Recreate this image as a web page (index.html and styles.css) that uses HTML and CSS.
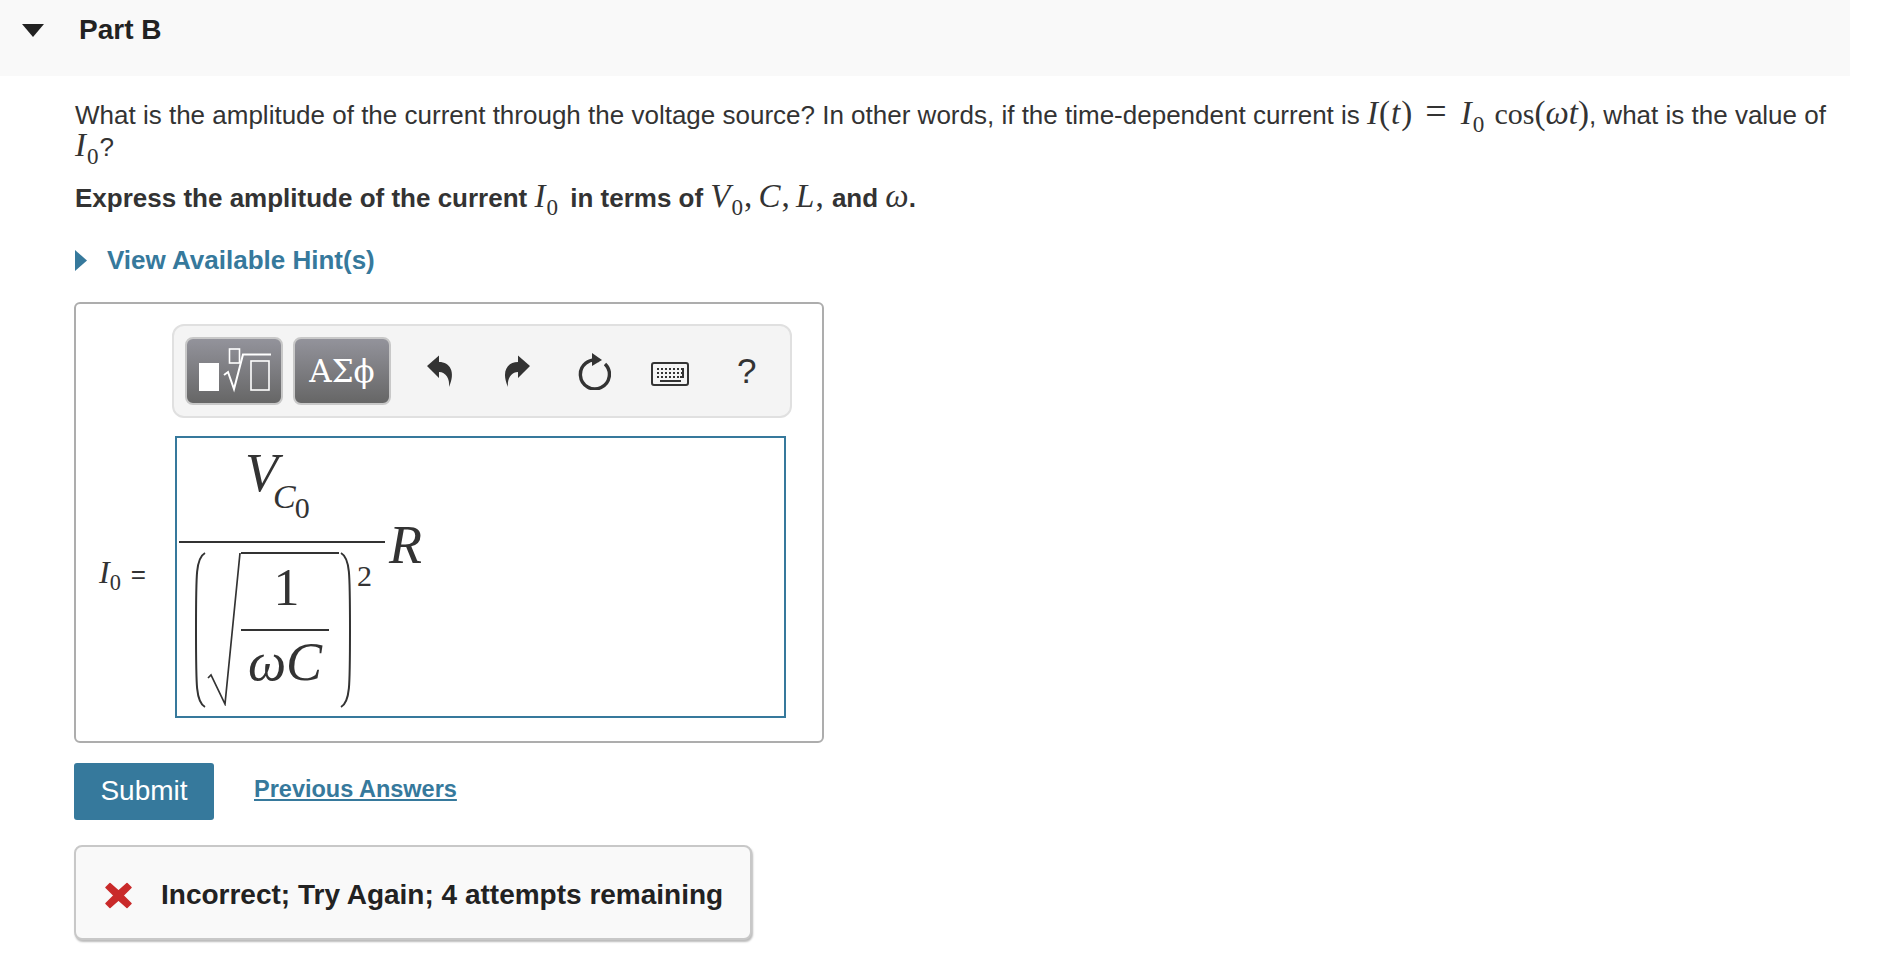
FILE: index.html
```html
<!DOCTYPE html>
<html lang="en">
<head>
<meta charset="utf-8">
<title>Part B</title>
<link rel="stylesheet" href="styles.css">
</head>
<body>
<header class="part-head">
  <svg class="caret" width="22" height="13" viewBox="0 0 22 13"><path d="M0 0H22L11 13Z" fill="#222"/></svg>
  <h2 class="part-title">Part B</h2>
</header>
<main class="content">
  <p class="question">What is the amplitude of the current through the voltage source? In other words, if the time-dependent current is <span class="tex"><i>I</i>(<i>t</i>)<span class="rel">=</span><i>I</i><sub>0</sub> <span class="fn">cos</span><span class="tight">(<i>ωt</i>)</span></span>, what is the value of <span class="tex"><i>I</i><sub>0</sub></span>?</p>
  <p class="prompt">Express the amplitude of the current <span class="tex tex-gap"><i>I</i><sub>0</sub></span> in terms of <span class="tex tex-list"><i>V</i><sub>0</sub>, <i>C</i>, <i>L</i>,</span> and <span class="tex tight"><i>ω</i></span>.</p>
  <div class="hint">
    <svg width="12" height="21" viewBox="0 0 12 21"><path d="M0 0L12 10.5L0 21Z" fill="#36799c"/></svg>
    <a class="hint-link">View Available Hint(s)</a>
  </div>
  <section class="answer-box">
    <div class="toolbar">
      <div class="tool-btn tool-btn-a">
        <svg width="76" height="46" viewBox="0 0 76 46" fill="none" stroke="#fff" stroke-width="1.6">
          <rect x="3" y="15" width="20" height="28" fill="#fff" stroke="none"/>
          <rect x="33.500" y="1" width="10" height="14"/>
          <rect x="55" y="13" width="18" height="29"/>
          <path d="M28 27L32 24L38 41L47 6.500H75" stroke-width="2"/>
        </svg>
      </div>
      <div class="tool-btn tool-btn-b">ΑΣϕ</div>
      <svg class="ic ic-undo" width="30" height="33" viewBox="0 0 30 33"><path d="M1 11L13 0.500V7C24 7 30 17 23 32C24 24 20 17 13 17V23Z" fill="#333"/></svg>
      <svg class="ic ic-redo" width="30" height="33" viewBox="0 0 30 33"><path d="M29 11L17 0.500V7C6 7 0 17 7 32C6 24 10 17 17 17V23Z" fill="#333"/></svg>
      <svg class="ic ic-reset" width="36" height="38" viewBox="0 0 36 38"><path d="M24 8.500A14.500 14.500 0 1 0 30 12" fill="none" stroke="#333" stroke-width="3.400"/><path d="M17 1L27 8L17 14Z" fill="#333"/></svg>
      <svg class="ic ic-keys" width="38" height="24" viewBox="0 0 38 24">
        <rect x="1" y="1" width="36" height="22" rx="2" fill="none" stroke="#333" stroke-width="2"/>
        <path d="M6 7H31M6 11H32M6 15H28" stroke="#333" stroke-width="2" stroke-dasharray="2 2" fill="none"/>
        <path d="M32 6V15H29M9 19H30" stroke="#333" stroke-width="2" fill="none"/>
      </svg>
      <span class="ic-help">?</span>
    </div>
    <div class="entry">
      <div class="entry-label"><i>I</i><sub>0</sub> <span class="eq">=</span></div>
      <div class="input">
        <div class="frac">
          <div class="num"><i>V</i><span class="sub1"><i>C</i><span class="sub2">0</span></span></div>
          <div class="denom">
            <svg class="paren" width="14" height="156" viewBox="0 0 14 156"><path d="M12 1C3 6 3 20 3 78C3 136 3 150 12 155" fill="none" stroke="#333" stroke-width="2"/></svg>
            <svg class="surd" width="34" height="154" viewBox="0 0 34 154"><path d="M1 126L4 123L18 152L33 1" fill="none" stroke="#333" stroke-width="1.700"/></svg>
            <div class="radicand">
              <div class="inner-num">1</div>
              <div class="inner-den"><i>ωC</i></div>
            </div>
            <svg class="paren" width="14" height="156" viewBox="0 0 14 156"><path d="M2 1C11 6 11 20 11 78C11 136 11 150 2 155" fill="none" stroke="#333" stroke-width="2"/></svg>
            <span class="sup">2</span>
          </div>
        </div>
        <i class="r">R</i>
      </div>
    </div>
  </section>
  <div class="actions">
    <button class="submit" type="button">Submit</button>
    <a class="prev">Previous Answers</a>
  </div>
  <div class="feedback">
    <svg width="27" height="27" viewBox="0 0 27 27"><path d="M5 1.500L13.500 9L22 1.500L26 5.500L18 13.500L26 21.500L22 25.500L13.500 18L5 25.500L1 21.500L9 13.500L1 5.500Z" fill="#c92a2a" stroke="#c92a2a" stroke-linejoin="round" stroke-width="1.500"/></svg>
    <span class="feedback-text">Incorrect; Try Again; 4 attempts remaining</span>
  </div>
</main>
</body>
</html>
```
FILE: styles.css
```css
* { box-sizing: border-box; }
html, body { margin: 0; background: #fff; }
body {
  width: 1888px;
  height: 960px;
  overflow: hidden;
  font-family: "Liberation Sans", Arial, sans-serif;
  font-size: 26px;
  line-height: 32px;
  color: #333;
}
.part-head {
  width: 1850px;
  height: 76px;
  background: #f9f9f9;
  display: flex;
  align-items: flex-start;
  padding: 14px 0 0 22px;
}
.caret { margin: 10px 35px 0 0; flex: none; }
.part-title { margin: 0; font-size: 28px; line-height: 32px; font-weight: 700; color: #222; }
.content { padding: 23px 0 0 74px; }
.question { margin: 0 0 0 1px; width: 1770px; }
.prompt { margin: 19px 0 0 1px; font-weight: 700; }
.tex { font-family: "Liberation Serif", serif; font-weight: 400; font-size: 33px; letter-spacing: 1px; line-height: 0; }
.tex-gap { margin-right: 4px; }
.tex-list { word-spacing: -4px; }
.tight { letter-spacing: 0; }
.rel { font-size: 38px; margin: 0 14px 0 12px; letter-spacing: 0; }
.fn { letter-spacing: 0; font-size: 30px; }
sub { font-size: 70%; line-height: 0; }
.hint { display: flex; align-items: center; gap: 20px; margin: 30px 0 0 1px; height: 32px; }
.hint-link { color: #36799c; font-weight: 700; font-size: 26px; }
.answer-box {
  width: 750px;
  height: 441px;
  margin-top: 26px;
  border: 2px solid #adadad;
  border-radius: 6px;
  padding: 20px 30px 0 96px;
}
.toolbar {
  width: 620px;
  height: 94px;
  background: #f4f4f4;
  border: 2px solid #e0e0e0;
  border-radius: 12px;
  display: flex;
  align-items: center;
  padding-left: 11px;
}
.tool-btn {
  height: 68px;
  border: 2px solid #c8c8c8;
  border-radius: 8px;
  background: linear-gradient(#93939b, #666);
  display: flex;
  align-items: center;
  justify-content: center;
  color: #fff;
  flex: none;
}
.tool-btn-a { width: 98px; margin-right: 10px; }
.tool-btn-b { width: 98px; font-family: "DejaVu Serif", serif; font-size: 31px; }
.ic { flex: none; }
.ic-undo { margin-left: 35px; }
.ic-redo { margin-left: 45px; }
.ic-reset { margin-left: 44px; }
.ic-keys { margin-left: 40px; margin-top: 5px; }
.ic-help { margin-left: 48px; font-size: 35px; }
.entry {
  display: flex;
  align-items: flex-start;
  margin: 18px 0 0 -73px;
}
.entry-label {
  width: 76px;
  padding: 120px 0 0 0;
  font-family: "Liberation Serif", serif;
  font-size: 32px;
  white-space: nowrap;
}
.eq { font-family: "Liberation Sans", sans-serif; font-size: 26px; margin-left: 2px; }
.input {
  width: 611px;
  height: 282px;
  border: 2px solid #36799c;
  display: flex;
  align-items: flex-start;
  font-family: "Liberation Serif", serif;
  padding: 0 0 0 2px;
}
.frac { width: 206px; display: flex; flex-direction: column; }
.num {
  height: 105px;
  border-bottom: 2px solid #333;
  padding: 8px 0 0 66px;
  font-size: 54px;
  line-height: 54px;
  display: flex;
  align-items: flex-start;
}
.sub1 { font-size: 34px; line-height: 34px; margin: 34px 0 0 -5px; }
.sub2 { font-size: 30px; font-style: normal; display: inline-block; margin: 11px 0 -11px -1px; vertical-align: top; }
.denom { display: flex; align-items: flex-start; padding: 9px 0 0 14px; }
.surd { flex: none; }
.paren { flex: none; }
.radicand { width: 98px; border-top: 2px solid #333; flex: none; display: flex; flex-direction: column; padding-right: 10px; }
.inner-num { height: 77px; padding: 9px 0 0 3px; text-align: center; font-size: 52px; line-height: 50px; border-bottom: 2px solid #333; }
.inner-den { text-align: center; font-size: 54px; line-height: 50px; padding-top: 6px; }
.sup { font-size: 30px; line-height: 30px; margin: 9px 0 0 4px; }
.r { font-size: 54px; line-height: 54px; margin: 80px 0 0 4px; }
.actions { display: flex; align-items: flex-start; margin-top: 20px; }
.submit {
  width: 140px;
  height: 57px;
  background: #36799c;
  color: #fff;
  border: 0;
  border-radius: 3px;
  font: 28px "Liberation Sans", sans-serif;
  padding: 0 0 2px;
}
.prev { margin: 10px 0 0 40px; color: #36799c; font-weight: 700; font-size: 23.500px; text-decoration: underline; }
.feedback {
  width: 678px;
  height: 95px;
  margin-top: 25px;
  background: #f9f9f9;
  border: 2px solid #c8c8c8;
  border-radius: 8px;
  box-shadow: 1px 2px 2px #bbb;
  display: flex;
  align-items: center;
  padding: 5px 0 0 29px;
  gap: 29px;
}
.feedback-text { font-weight: 700; font-size: 28px; color: #222; }
```
